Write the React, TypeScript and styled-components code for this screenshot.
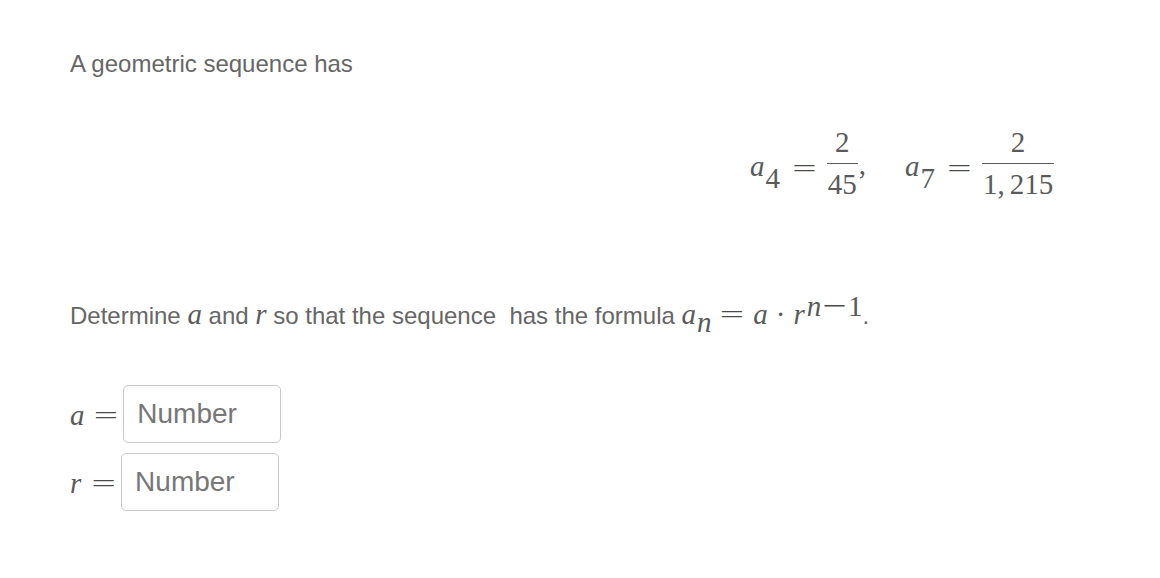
import * as React from 'react';
import styled, { createGlobalStyle } from 'styled-components';

const GlobalStyle = createGlobalStyle`
  html, body {
    margin: 0;
    padding: 0;
    background: #ffffff;
  }
  body {
    font-family: "Liberation Sans", Arial, Helvetica, sans-serif;
    color: #666666;
  }
`;

export default function App() {
  return (
    <React.Fragment>
      <GlobalStyle />
      <Page>
        <Intro>A geometric sequence has</Intro>

        <Display>
          <Term>
            <Var>a</Var>
            <Sub>4</Sub>
          </Term>
          <Rel>=</Rel>
          <Fraction>
            <Num>2</Num>
            <Den>45</Den>
          </Fraction>
          <Punct>,</Punct>
          <Quad />
          <Term>
            <Var>a</Var>
            <Sub>7</Sub>
          </Term>
          <Rel>=</Rel>
          <Fraction>
            <Num>2</Num>
            <Den>
              1,<Thin />215
            </Den>
          </Fraction>
        </Display>

        <Prompt>
          Determine <InlineVar>a</InlineVar> and <InlineVar>r</InlineVar> so that the
          sequence{'\u00a0'} has the formula{' '}
          <MathRun>
            <Var>a</Var>
            <Sub $italic>n</Sub>
            <InlineRel>=</InlineRel>
            <Var>a</Var>
            <Dot>·</Dot>
            <Var>r</Var>
            <Sup>
              <Var>n</Var>
              <Minus>−</Minus>
              <Digit>1</Digit>
            </Sup>
          </MathRun>
          .
        </Prompt>

        <Answers>
          <AnswerRow>
            <Label>
              <Var>a</Var>
              <LabelRel>=</LabelRel>
            </Label>
            <NumberInput placeholder="Number" />
          </AnswerRow>
          <AnswerRow>
            <Label>
              <Var>r</Var>
              <LabelRel $wide>=</LabelRel>
            </Label>
            <NumberInput placeholder="Number" />
          </AnswerRow>
        </Answers>
      </Page>
    </React.Fragment>
  );
}

const mathFont = `"Liberation Serif", "Times New Roman", serif`;
const opFont = `"DejaVu Sans", sans-serif`;

const Page = styled.div`
  padding: 46px 70px 40px 70px;
  font-size: 24px;
  line-height: 36px;
  color: #666666;
`;

const Intro = styled.p`
  margin: 0;
`;

const Display = styled.div`
  display: flex;
  flex-direction: row;
  align-items: center;
  margin-top: 46px;
  padding-left: 680px;
  font-family: ${mathFont};
  font-size: 29px;
  line-height: 1;
  color: #5a5a5a;
`;

const Term = styled.span`
  display: inline-block;
  line-height: 1;
  margin-top: 6px;
`;

const Var = styled.span`
  font-family: ${mathFont};
  font-style: italic;
  font-size: 29px;
`;

const Sub = styled.span<{ $italic?: boolean }>`
  font-family: ${mathFont};
  font-style: ${(p) => (p.$italic ? 'italic' : 'normal')};
  font-size: 29px;
  vertical-align: ${(p) => (p.$italic ? '-0.26em' : '-0.4em')};
  line-height: 0;
  margin-left: 1px;
`;

const Rel = styled.span`
  font-family: ${opFont};
  font-size: 32px;
  font-weight: 300;
  color: #4a4a4a;
  margin: 6px 9px 0 11px;
`;

const Fraction = styled.span`
  display: inline-flex;
  flex-direction: column;
  align-items: center;
`;

const Num = styled.span`
  padding: 0 1px 6px 1px;
  border-bottom: 1px solid #5a5a5a;
  align-self: stretch;
  text-align: center;
`;

const Den = styled.span`
  padding: 6px 1px 0 1px;
`;

const Thin = styled.span`
  display: inline-block;
  width: 5px;
`;

const Punct = styled.span`
  align-self: flex-end;
  margin-bottom: 20px;
  margin-left: 1px;
`;

const Quad = styled.span`
  width: 39px;
`;

const Prompt = styled.p`
  margin: 97px 0 0 0;
`;

const InlineVar = styled.span`
  font-family: ${mathFont};
  font-style: italic;
  font-size: 29px;
  color: #5a5a5a;
`;

const MathRun = styled.span`
  font-family: ${mathFont};
  font-size: 29px;
  color: #5a5a5a;
  line-height: 0;
`;

const InlineRel = styled.span`
  font-family: ${opFont};
  font-size: 32px;
  font-weight: 300;
  color: #4a4a4a;
  margin: 0 8px 0 7px;
`;

const Dot = styled.span`
  margin: 0 8px;
`;

const Sup = styled.span`
  vertical-align: 0.26em;
  line-height: 0;
  margin-left: 2px;
`;

const Minus = styled.span`
  font-family: ${opFont};
  font-size: 32px;
  font-weight: 300;
  color: #4a4a4a;
`;

const Digit = styled.span`
  font-size: 29px;
`;

const Answers = styled.div`
  display: flex;
  flex-direction: column;
  gap: 10px;
  margin-top: 51px;
`;

const AnswerRow = styled.div`
  display: flex;
  flex-direction: row;
  align-items: center;
`;

const Label = styled.span`
  display: inline-flex;
  align-items: baseline;
  color: #5a5a5a;
  line-height: 1;
`;

const LabelRel = styled.span<{ $wide?: boolean }>`
  font-family: ${opFont};
  font-size: 32px;
  font-weight: 300;
  color: #4a4a4a;
  margin: 0 4px 0 ${(p) => (p.$wide ? '9px' : '8px')};
`;

const NumberInput = styled.input`
  box-sizing: border-box;
  width: 158px;
  height: 58px;
  padding: 0 13px;
  border: 1px solid #c9c9c9;
  border-radius: 5px;
  background: #ffffff;
  font-family: "Liberation Sans", Arial, Helvetica, sans-serif;
  font-size: 28px;
  color: #555555;
  outline: none;
  &::placeholder {
    color: #777777;
  }
`;
